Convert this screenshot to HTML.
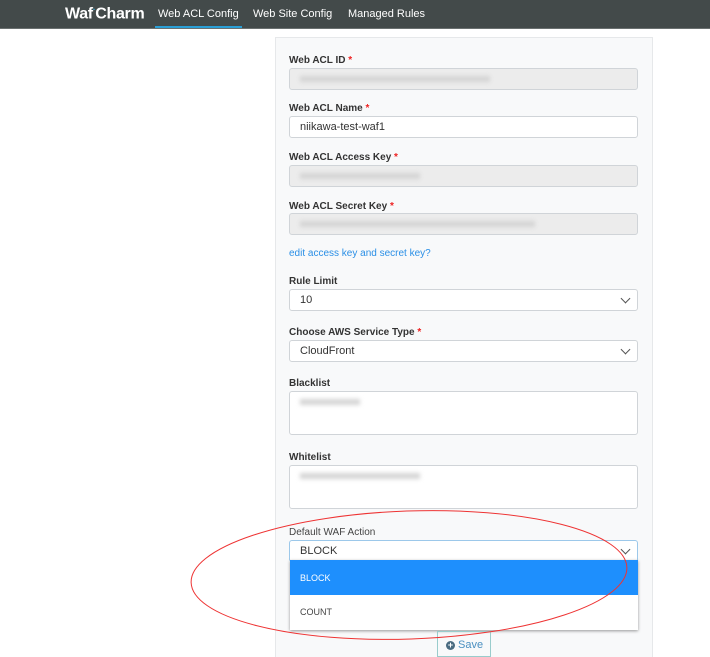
<!DOCTYPE html>
<html><head><style>
html,body{margin:0;width:710px;height:657px;overflow:hidden}
body{background:#fff;font-family:"Liberation Sans",sans-serif;position:relative}
.nav{position:absolute;left:0;top:0;width:710px;height:28px;background:#434a4a;border-bottom:1px solid #6a7070}
.nav span{position:absolute;top:8px;color:#fff;font-size:11px}
.logo{left:65px;top:5px!important;font-weight:bold;font-size:16px!important;letter-spacing:-0.3px}
.panel{position:absolute;left:275px;top:37px;width:376px;height:640px;background:#f8f9fa;border:1px solid #e6e8ea}
.l{position:absolute;left:289px;font-size:10px;font-weight:bold;color:#333}
.l b{color:#e22}
.i{position:absolute;left:289px;width:349px;height:22px;border:1px solid #d0d4d8;border-radius:3px;background:#fff;box-sizing:border-box;font-size:11px;color:#333;padding:4px 10px}
.g{background:#ececec;color:transparent}
.g i,.t i{display:inline-block;height:6px;margin-top:3px;background:#d4d4d4;filter:blur(2px)}
.ch{position:absolute;right:8px;top:5px;width:6px;height:6px;border-right:1.3px solid #555;border-bottom:1.3px solid #555;transform:rotate(45deg)}
.t{height:44px}
</style></head><body>
<div class="nav"><span class="logo">Waf<sup style="color:#3bb7e8;font-size:8px">·</sup>Charm</span>
<span style="left:158px">Web ACL Config</span><div style="position:absolute;left:155px;top:26px;width:87px;height:2px;background:#2a9fd6"></div>
<span style="left:253px">Web Site Config</span><span style="left:348px">Managed Rules</span></div>
<div class="panel"></div>
<div class="l" style="top:55px">Web ACL ID <b>*</b></div>
<div class="i g" style="top:68px"><i style="width:190px"></i></div>
<div class="l" style="top:103px">Web ACL Name <b>*</b></div>
<div class="i" style="top:116px">niikawa-test-waf1</div>
<div class="l" style="top:152px">Web ACL Access Key <b>*</b></div>
<div class="i g" style="top:165px"><i style="width:120px"></i></div>
<div class="l" style="top:201px">Web ACL Secret Key <b>*</b></div>
<div class="i g" style="top:213px"><i style="width:235px"></i></div>
<div style="position:absolute;left:289px;top:248px;font-size:10px;color:#2a8fe6">edit access key and secret key?</div>
<div class="l" style="top:276px">Rule Limit</div>
<div class="i" style="top:289px">10<div class="ch"></div></div>
<div class="l" style="top:327px">Choose AWS Service Type <b>*</b></div>
<div class="i" style="top:340px">CloudFront<div class="ch"></div></div>
<div class="l" style="top:378px">Blacklist</div>
<div class="i t" style="top:391px"><i style="width:60px"></i></div>
<div class="l" style="top:452px">Whitelist</div>
<div class="i t" style="top:465px"><i style="width:120px"></i></div>
<div class="l" style="top:527px;font-weight:normal;color:#444">Default WAF Action</div>
<div class="i" style="top:540px;border-color:#9cc8ea">BLOCK<div class="ch"></div></div>
<div style="position:absolute;left:290px;top:560px;width:348px;height:70px;background:#fff;box-shadow:0 1px 3px rgba(0,0,0,.4);font-size:9px">
<div style="height:35px;background:#1e8ffd;color:#fff;padding:13px 10px;box-sizing:border-box">BLOCK</div>
<div style="padding:12px 10px;color:#444">COUNT</div></div>
<div style="position:absolute;left:437px;top:631px;width:54px;height:26px;border:1px solid #9cc;box-sizing:border-box;font-size:11px;color:#4a8fc0;padding:7px 0 0 8px"><span style="display:inline-block;width:9px;height:9px;border-radius:50%;background:#4a6b80;color:#fff;font-size:9px;line-height:9px;text-align:center;font-weight:bold">+</span> Save</div>
<svg style="position:absolute;left:0;top:0" width="710" height="657"><ellipse cx="409" cy="575" rx="218" ry="64" transform="rotate(-2 409 575)" fill="none" stroke="#e33" stroke-width="1"/></svg>
</body></html>
